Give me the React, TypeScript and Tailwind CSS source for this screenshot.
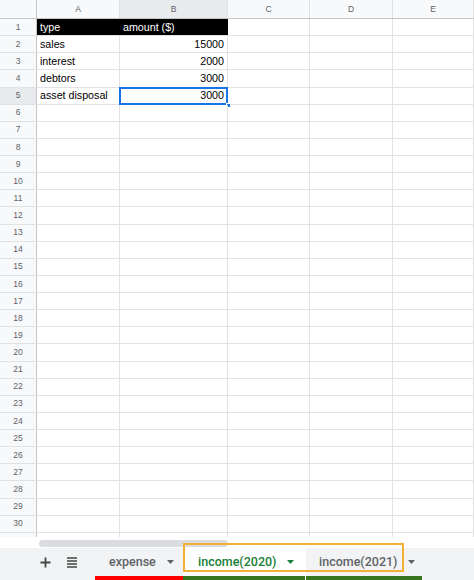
import React from "react";

const cols = [
  { w: 83, label: "A" },
  { w: 108, label: "B" },
  { w: 82, label: "C" },
  { w: 83, label: "D" },
  { w: 81, label: "E" },
];

const data: Record<number, [string, string]> = {
  1: ["type", "amount ($)"],
  2: ["sales", "15000"],
  3: ["interest", "2000"],
  4: ["debtors", "3000"],
  5: ["asset disposal", "3000"],
};

function Caret({ color }: { color: string }) {
  return (
    <svg width="7" height="4" viewBox="0 0 7 4" className="shrink-0">
      <path d="M0 0 L7 0 L3.5 4 Z" fill={color} />
    </svg>
  );
}

export default function App() {
  const rows = Array.from({ length: 31 }, (_, i) => i + 1);
  return (
    <div
      className="w-[474px] h-[580px] overflow-hidden flex flex-col bg-white"
      style={{ fontFamily: '"Liberation Sans", Arial, sans-serif' }}
    >
      <div className="relative flex-1 overflow-hidden">
        {/* header row */}
        <div className="flex h-[19px] bg-[#f8f9fa] border-b border-[#c4c7c5]">
          <div className="w-[37px] shrink-0 border-r border-[#c4c7c5]" />
          {cols.map((c) => (
            <div
              key={c.label}
              style={{ width: c.w }}
              className={`shrink-0 border-r border-[#e1e1e1] flex items-center justify-center text-[8.5px] text-[#5f6368] ${
                c.label === "B" ? "bg-[#e8eaed]" : ""
              }`}
            >
              {c.label}
            </div>
          ))}
        </div>
        {rows.map((r) => {
          const d = data[r];
          return (
            <div key={r} className="flex h-[17.13px] border-b border-[#e2e2e2]">
              <div
                className={`w-[37px] shrink-0 border-r border-[#c4c7c5] flex items-center justify-center text-[8.5px] text-[#5f6368] ${
                  r === 5 ? "bg-[#e8eaed]" : "bg-[#f8f9fa]"
                }`}
              >
                {r}
              </div>
              {cols.map((c, ci) => {
                const black = r === 1 && ci < 2;
                const selected = r === 5 && ci === 1;
                let txt = "";
                if (d && ci === 0) txt = d[0];
                if (d && ci === 1) txt = d[1];
                const right = ci === 1 && r > 1;
                return (
                  <div
                    key={c.label}
                    style={{ width: c.w }}
                    className={`relative shrink-0 border-r flex items-center px-[3px] text-[10.7px] leading-none whitespace-nowrap ${
                      black ? "bg-black text-white border-black" : "text-black border-[#e2e2e2]"
                    } ${right ? "justify-end" : "justify-start"}`}
                  >
                    {txt}
                    {selected && (
                      <>
                        <div className="absolute left-[-1px] top-[-1px] right-[-1px] bottom-[-1px] border-2 border-[#1a73e8]" />
                        <div className="absolute right-[-4px] bottom-[-4px] w-[5px] h-[5px] bg-[#1a73e8] border border-white" />
                      </>
                    )}
                  </div>
                );
              })}
            </div>
          );
        })}
        {/* horizontal scrollbar */}
        <div className="absolute left-0 right-0 bottom-0 h-[11px] bg-white">
          <div className="absolute left-[39px] top-[3px] w-[189px] h-[7px] rounded-full bg-[#dadce0]" />
        </div>
      </div>

      {/* sheet tab bar */}
      <div
        className="relative h-[32px] shrink-0 flex bg-[#f1f3f4]"
        style={{ fontFamily: 'Roboto, "Liberation Sans", sans-serif' }}
      >
        <div className="w-[95px] shrink-0 flex items-center pl-[40px] gap-[16px] pb-[3px]">
          <svg width="11" height="11" viewBox="0 0 11 11">
            <path d="M5.5 0.5 V10.5 M0.5 5.5 H10.5" stroke="#444746" strokeWidth="1.8" />
          </svg>
          <svg width="10" height="11" viewBox="0 0 10 11">
            <path d="M0 1 H10 M0 4 H10 M0 7 H10 M0 10 H10" stroke="#444746" strokeWidth="1.6" />
          </svg>
        </div>
        <div className="relative w-[88px] shrink-0 flex items-center pl-[14px] gap-[11px] pb-[4px]">
          <span className="text-[12.5px] font-medium text-[#5f6368]">expense</span>
          <Caret color="#5f6368" />
          <div className="absolute left-0 right-0 bottom-0 h-[4px] bg-[#ff0000]" />
        </div>
        <div className="relative w-[122px] shrink-0 flex items-center pl-[15px] gap-[11px] pb-[4px] bg-white">
          <span className="text-[12.5px] font-medium text-[#188038]">income(2020)</span>
          <Caret color="#188038" />
          <div className="absolute left-0 right-0 bottom-0 h-[4px] bg-[#38761d]" />
        </div>
        <div className="relative w-[117px] shrink-0 flex items-center pl-[13px] gap-[11px] pb-[4px] border-l border-white">
          <span className="text-[12.5px] font-medium text-[#5f6368]">income(2021)</span>
          <Caret color="#5f6368" />
          <div className="absolute left-0 right-0 bottom-0 h-[4px] bg-[#38761d]" />
        </div>
        <div className="flex-1 bg-[#f1f3f4]" />
        {/* highlight outline */}
        <div className="absolute left-[183px] top-[-5px] w-[221px] h-[29px] border-2 border-[#f2b134] pointer-events-none" />
      </div>
    </div>
  );
}
